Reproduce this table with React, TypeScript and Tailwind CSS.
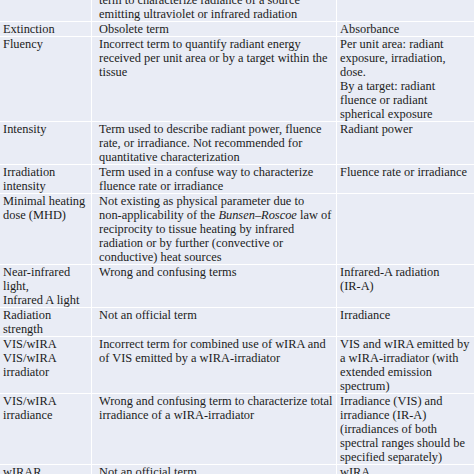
import { ReactNode } from 'react'

type Row = {
    term: ReactNode[]
    note: ReactNode[]
    use: ReactNode[]
}

const rows: Row[] = [
    {
        term: [],
        note: ['term to characterize radiance of a source', 'emitting ultraviolet or infrared radiation'],
        use: [],
    },
    { term: ['Extinction'], note: ['Obsolete term'], use: ['Absorbance'] },
    {
        term: ['Fluency'],
        note: ['Incorrect term to quantify radiant energy', 'received per unit area or by a target within the', 'tissue'],
        use: [
            'Per unit area: radiant',
            'exposure, irradiation,',
            'dose.',
            'By a target: radiant',
            'fluence or radiant',
            'spherical exposure',
        ],
    },
    {
        term: ['Intensity'],
        note: [
            'Term used to describe radiant power, fluence',
            'rate, or irradiance. Not recommended for',
            'quantitative characterization',
        ],
        use: ['Radiant power'],
    },
    {
        term: ['Irradiation', 'intensity'],
        note: ['Term used in a confuse way to characterize', 'fluence rate or irradiance'],
        use: ['Fluence rate or irradiance'],
    },
    {
        term: ['Minimal heating', 'dose (MHD)'],
        note: [
            'Not existing as physical parameter due to',
            <>
                non-applicability of the <i>Bunsen–Roscoe</i> law of
            </>,
            'reciprocity to tissue heating by infrared',
            'radiation or by further (convective or',
            'conductive) heat sources',
        ],
        use: [],
    },
    {
        term: ['Near-infrared', 'light,', 'Infrared A light'],
        note: ['Wrong and confusing terms'],
        use: ['Infrared-A radiation', '(IR-A)'],
    },
    {
        term: ['Radiation', 'strength'],
        note: ['Not an official term'],
        use: ['Irradiance'],
    },
    {
        term: ['VIS/wIRA', 'VIS/wIRA', 'irradiator'],
        note: ['Incorrect term for combined use of wIRA and', 'of VIS emitted by a wIRA-irradiator'],
        use: ['VIS and wIRA emitted by', 'a wIRA-irradiator (with', 'extended emission', 'spectrum)'],
    },
    {
        term: ['VIS/wIRA', 'irradiance'],
        note: ['Wrong and confusing term to characterize total', 'irradiance of a wIRA-irradiator'],
        use: [
            'Irradiance (VIS) and',
            'irradiance (IR-A)',
            '(irradiances of both',
            'spectral ranges should be',
            'specified separately)',
        ],
    },
    {
        term: ['wIRAR'],
        note: ['Not an official term'],
        use: ['wIRA'],
    },
]

function Lines({ lines }: { lines: ReactNode[] }) {
    return (
        <>
            {lines.map((l, i) => (
                <div key={i} className="whitespace-nowrap">
                    {l}
                </div>
            ))}
        </>
    )
}

export default function App() {
    return (
        <div className="w-[474px] h-[474px] overflow-hidden bg-[#e9ecf5]">
            <div
                className="-mt-[7px] text-[12.4px] leading-[14px] text-[#1c1c1c]"
                style={{ fontFamily: '"Liberation Serif", "Times New Roman", serif' }}
            >
                {rows.map((row, i) => (
                    <div
                        key={i}
                        className="grid grid-cols-[92px_245px_1fr] border-b border-white"
                    >
                        <div className="pl-[3px] border-r border-white">
                            <Lines lines={row.term} />
                        </div>
                        <div className="pl-[7px] border-r border-white">
                            <Lines lines={row.note} />
                        </div>
                        <div className="pl-[3px]">
                            <Lines lines={row.use} />
                        </div>
                    </div>
                ))}
            </div>
        </div>
    )
}
